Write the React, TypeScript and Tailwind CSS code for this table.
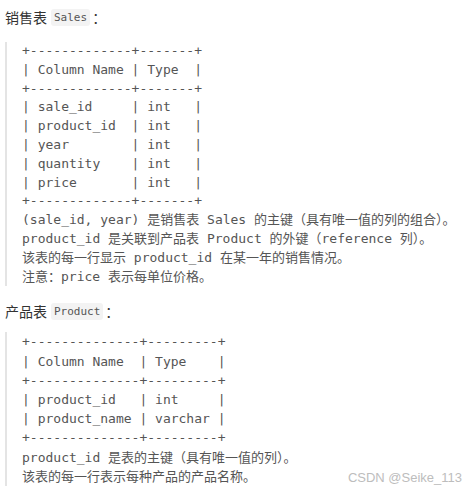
const mono = "font-['DejaVu_Sans_Mono','Noto_Sans_CJK_SC',monospace]";

const salesBlock = `+-------------+-------+
| Column Name | Type  |
+-------------+-------+
| sale_id     | int   |
| product_id  | int   |
| year        | int   |
| quantity    | int   |
| price       | int   |
+-------------+-------+
(sale_id, year) 是销售表 Sales 的主键（具有唯一值的列的组合）。
product_id 是关联到产品表 Product 的外键（reference 列）。
该表的每一行显示 product_id 在某一年的销售情况。
注意：price 表示每单位价格。`;

const productBlock = `+--------------+---------+
| Column Name  | Type    |
+--------------+---------+
| product_id   | int     |
| product_name | varchar |
+--------------+---------+
product_id 是表的主键（具有唯一值的列）。
该表的每一行表示每种产品的产品名称。`;

function Heading({ label, code }: { label: string; code: string }) {
  return (
    <p className="flex items-center pl-[5px] text-[14px] leading-[22px] text-[#333] font-['Noto_Sans_CJK_SC',sans-serif]">
      {label}
      <code
        className={`ml-[4px] rounded-[3px] bg-[#f3f3f3] px-[3px] text-[11px] leading-[17px] text-[#555] ${mono}`}
      >
        {code}
      </code>
      <span className="ml-[2px]">：</span>
    </p>
  );
}

function CodeBlock({ text, leading }: { text: string; leading: string }) {
  return (
    <pre
      className={`ml-[5px] border-l-[2px] border-[#e4e4e4] pl-[15px] text-[13px] text-[#555] ${leading} ${mono}`}
    >
      {text}
    </pre>
  );
}

export default function App() {
  return (
    <div className="relative h-[489px] w-[474px] overflow-hidden bg-white">
      <div className="pt-[6px]">
        <Heading label="销售表" code="Sales" />
      </div>
      <div className="mt-[14px]">
        <CodeBlock text={salesBlock} leading="leading-[18.8px]" />
      </div>
      <div className="mt-[14px]">
        <Heading label="产品表" code="Product" />
      </div>
      <div className="mt-[10px]">
        <CodeBlock text={productBlock} leading="leading-[19.2px]" />
      </div>
      <span className="absolute right-[12px] bottom-[2px] text-[13px] text-[#bdbdbd] font-['Liberation_Sans',sans-serif]">
        CSDN @Seike_113
      </span>
    </div>
  );
}
